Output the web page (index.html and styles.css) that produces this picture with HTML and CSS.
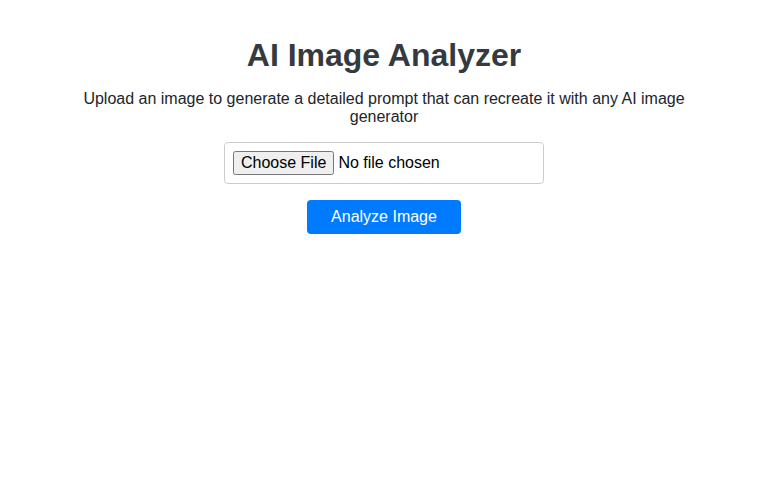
FILE: index.html
```html
<!DOCTYPE html>
<html>
<head>
<meta charset="utf-8">
<link rel="stylesheet" href="styles.css">
</head>
<body>
<div class="container">
  <h1 class="title">AI Image Analyzer</h1>
  <p class="subtitle">Upload an image to generate a detailed prompt that can recreate it with any AI image generator</p>
  <div class="form">
    <input class="file" type="file" accept="image/*">
    <button class="analyze" type="button">Analyze Image</button>
  </div>
</div>
</body>
</html>
```
FILE: styles.css
```css
html, body {
  margin: 0;
  padding: 0;
  background: #fff;
}
body {
  font-family: "Liberation Sans", Arial, sans-serif;
  color: #212529;
}
.container {
  max-width: 640px;
  margin: 0 auto;
  padding: 16px 20px;
  text-align: center;
}
.title {
  font-size: 32px;
  font-weight: bold;
  color: #343a40;
  margin: 21px 0 16px;
}
.subtitle {
  font-size: 16px;
  line-height: 18px;
  margin: 16px 0;
}
.form {
  display: flex;
  flex-direction: column;
  align-items: center;
  gap: 16px;
}
.file {
  box-sizing: border-box;
  width: 320px;
  padding: 8px;
  border: 1px solid #ccc;
  border-radius: 4px;
  font-family: "Liberation Sans", Arial, sans-serif;
  font-size: 16px;
  color: #000;
}
.analyze {
  background: #007bff;
  color: #fff;
  border: none;
  border-radius: 4px;
  padding: 8px 24px;
  font-family: "Liberation Sans", Arial, sans-serif;
  font-size: 16px;
  line-height: 18px;
  cursor: pointer;
}
```
